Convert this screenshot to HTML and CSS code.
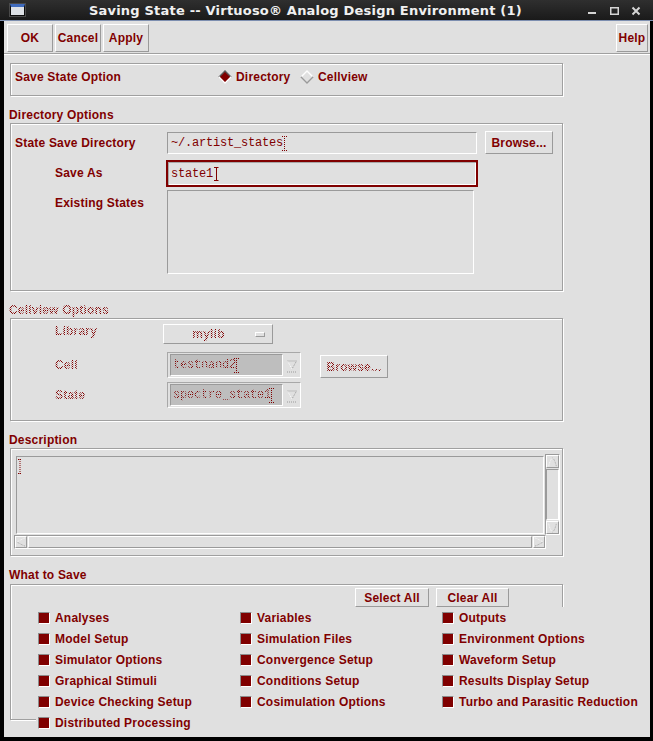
FILE: index.html
```html
<!DOCTYPE html>
<html>
<head>
<meta charset="utf-8">
<title>Saving State</title>
<link rel="stylesheet" href="styles.css">
</head>
<body>
<div class="win">
  <div class="titlebar">
    <span class="ticon"></span>
    <span class="ttitle">Saving State -- Virtuoso® Analog Design Environment (1)</span>
    <svg class="tctrls" width="56" height="20" viewBox="0 0 56 20">
      <path d="M1 13H9" stroke="#d4d4d4" stroke-width="2"/>
      <rect x="23.75" y="7.75" width="7.5" height="6.5" fill="none" stroke="#d4d4d4" stroke-width="1.5"/>
      <path d="M45.5 7.5L52.5 14.5M52.5 7.5L45.5 14.5" stroke="#d4d4d4" stroke-width="2"/>
    </svg>
  </div>
  <div class="tline"></div>
  <div class="main">
    <div class="toolbar">
      <div class="btn tb">OK</div>
      <div class="btn tb">Cancel</div>
      <div class="btn tb">Apply</div>
      <div class="btn tb help">Help</div>
    </div>

    <div class="frame f-save">
      <span class="save-lbl">Save State Option</span>
      <span class="radio r-dir">
        <svg width="14" height="14" viewBox="0 0 14 14">
          <polygon points="7,0.8 13.2,7 7,13.2 0.8,7" fill="#800000"/>
          <path d="M0.8 7.2L7 1L13.2 7.2" fill="none" stroke="#5a5a5a" stroke-width="1.3"/>
          <path d="M0.8 6.8L7 13L13.2 6.8" fill="none" stroke="#ffffff" stroke-width="1.3"/>
        </svg>
        Directory
      </span>
      <span class="radio">
        <svg width="14" height="14" viewBox="0 0 14 14">
          <polygon points="7,0.8 13.2,7 7,13.2 0.8,7" fill="#e0e0e0"/>
          <path d="M0.8 7.2L7 1L13.2 7.2" fill="none" stroke="#ffffff" stroke-width="1.3"/>
          <path d="M0.8 6.8L7 13L13.2 6.8" fill="none" stroke="#9a9a9a" stroke-width="1.3"/>
        </svg>
        Cellview
      </span>
    </div>

    <div class="sect">Directory Options</div>
    <div class="frame f-dir">
      <div class="row">
        <span class="lcol">State Save Directory</span>
        <div class="field fdir">~/.artist_states<svg class="dcur" width="5" height="15" viewBox="0 0 5 15"><path d="M0 .5H5M2.5 0V15M0 14.5H5" stroke="#800000" stroke-dasharray="1 1" fill="none"/></svg></div>
        <div class="btn browse">Browse...</div>
      </div>
      <div class="row r2">
        <span class="lcol ind saveas">Save As</span>
        <div class="field fsave">state1<svg class="scur" width="5" height="14" viewBox="0 0 5 14"><path d="M0 .5H4.5M2.5 0V14M0 13.5H4.5" stroke="#800000" stroke-width="1" fill="none"/></svg></div>
      </div>
      <div class="row r3">
        <span class="lcol ind exist">Existing States</span>
        <div class="listbox"></div>
      </div>
    </div>

    <div class="sect stip">Cellview Options</div>
    <div class="frame f-cv">
      <div class="row">
        <span class="lcol lib ind"><span class="stip">Library</span></span>
        <div class="btn libdd">
          <span class="ddtext stip">mylib</span>
          <span class="ddind"></span>
        </div>
      </div>
      <div class="row rc">
        <span class="lcol ind"><span class="stip">Cell</span></span>
        <div class="combo">
          <div class="cfield"><span class="stip">testnand2</span><svg class="dcur" width="5" height="15" viewBox="0 0 5 15"><path d="M0 .5H5M2.5 0V15M0 14.5H5" stroke="#800000" stroke-dasharray="1 1" fill="none"/></svg></div>
          <div class="carrow"><svg width="14" height="22" viewBox="0 0 14 22"><path d="M2.5 7L7 15" stroke="#fff" stroke-dasharray="1 1" fill="none"/><path d="M2.5 7H11.5L7 15M2 18H12" stroke="#9a9a9a" stroke-dasharray="1 1" fill="none"/></svg></div>
        </div>
        <div class="btn browse2"><span class="stip">Browse...</span></div>
      </div>
      <div class="row rs">
        <span class="lcol ind"><span class="stip">State</span></span>
        <div class="combo">
          <div class="cfield"><span class="stip">spectre_state1</span><svg class="dcur" width="5" height="15" viewBox="0 0 5 15"><path d="M0 .5H5M2.5 0V15M0 14.5H5" stroke="#800000" stroke-dasharray="1 1" fill="none"/></svg></div>
          <div class="carrow"><svg width="14" height="22" viewBox="0 0 14 22"><path d="M2.5 7L7 15" stroke="#fff" stroke-dasharray="1 1" fill="none"/><path d="M2.5 7H11.5L7 15M2 18H12" stroke="#9a9a9a" stroke-dasharray="1 1" fill="none"/></svg></div>
        </div>
      </div>
    </div>

    <div class="sect">Description</div>
    <div class="frame f-desc">
      <div class="drow">
        <div class="tarea"><svg class="tcur" width="5" height="15" viewBox="0 0 5 15"><path d="M0 .5H4M2 0V15M0 14.5H4" stroke="#800000" stroke-dasharray="1 1" fill="none"/></svg></div>
        <div class="vscroll">
          <div class="sarrow up"><svg width="13" height="12" viewBox="0 0 13 12"><path d="M2 11C3 6 5 2 6.5 1" stroke="#fff" stroke-dasharray="1 1" fill="none"/><path d="M6.5 1C8 2 10 6 11 11" stroke="#9a9a9a" stroke-dasharray="1 1" fill="none"/></svg></div>
          <div class="vtrough"></div>
          <div class="sarrow dn"><svg width="13" height="12" viewBox="0 0 13 12"><path d="M2 1C3 6 5 10 6.5 11" stroke="#fff" stroke-dasharray="1 1" fill="none"/><path d="M6.5 11C8 10 10 6 11 1" stroke="#9a9a9a" stroke-dasharray="1 1" fill="none"/></svg></div>
        </div>
      </div>
      <div class="hscroll">
        <div class="harrow"><svg width="12" height="12" viewBox="0 0 12 12"><path d="M11 1C6 3 3 5 1 6" stroke="#fff" stroke-dasharray="1 1" fill="none"/><path d="M1 6C3 7 6 9 11 11" stroke="#9a9a9a" stroke-dasharray="1 1" fill="none"/></svg></div>
        <div class="htrough"></div>
        <div class="harrow"><svg width="12" height="12" viewBox="0 0 12 12"><path d="M1 1C6 3 9 5 11 6" stroke="#fff" stroke-dasharray="1 1" fill="none"/><path d="M11 6C9 7 6 9 1 11" stroke="#9a9a9a" stroke-dasharray="1 1" fill="none"/></svg></div>
      </div>
    </div>

    <div class="sect swhat">What to Save</div>
    <div class="frame f-what">
      <div class="selrow">
        <div class="btn sm sel">Select All</div>
        <div class="btn sm clr">Clear All</div>
      </div>
      <div class="checks">
        <div class="ck"><span class="box"></span>Analyses</div>
        <div class="ck"><span class="box"></span>Variables</div>
        <div class="ck"><span class="box"></span>Outputs</div>
        <div class="ck"><span class="box"></span>Model Setup</div>
        <div class="ck"><span class="box"></span>Simulation Files</div>
        <div class="ck"><span class="box"></span>Environment Options</div>
        <div class="ck"><span class="box"></span>Simulator Options</div>
        <div class="ck"><span class="box"></span>Convergence Setup</div>
        <div class="ck"><span class="box"></span>Waveform Setup</div>
        <div class="ck"><span class="box"></span>Graphical Stimuli</div>
        <div class="ck"><span class="box"></span>Conditions Setup</div>
        <div class="ck"><span class="box"></span>Results Display Setup</div>
        <div class="ck"><span class="box"></span>Device Checking Setup</div>
        <div class="ck"><span class="box"></span>Cosimulation Options</div>
        <div class="ck"><span class="box"></span>Turbo and Parasitic Reduction</div>
        <div class="ck"><span class="box"></span>Distributed Processing</div>
      </div>
    </div>
  </div>
</div>
</body>
</html>
```

FILE: styles.css
```css
* { box-sizing: border-box; }
html, body { margin: 0; padding: 0; background: #000; }
body { width: 653px; height: 741px; overflow: hidden; font-family: "Liberation Sans", Arial, sans-serif; }

.win { width: 653px; height: 741px; display: flex; flex-direction: column; background: #000; }

.titlebar { flex: none; height: 20px; display: flex; align-items: center; background: linear-gradient(#2f2f2f, #1a1a1a); }
.ticon { flex: none; width: 15px; height: 12px; margin-left: 10px; background: #dde1e6; border: 1px solid #0c0c0c; border-top: 3px solid #3f6bbd; box-shadow: 0 0 0 1px #4a4a4a; }
.ttitle { margin-left: 64px; font: bold 13px "DejaVu Sans", sans-serif; letter-spacing: 0.2px; white-space: nowrap; color: #f0f0f0; }
.tctrls { flex: none; margin-left: auto; margin-right: 10px; }
.tline { flex: none; height: 1px; background: #7d8fb0; }

.main { flex: none; height: 716px; margin: 0 3px 0 4px; background: #e0e0e0; color: #800000; font-size: 12px; font-weight: bold; letter-spacing: 0.2px; line-height: 14px; overflow: hidden; }

.btn { display: flex; align-items: center; justify-content: center; background: #e0e0e0; border: 1px solid; border-color: #fff #9a9a9a #9a9a9a #fff; white-space: nowrap; flex: none; }

.toolbar { display: flex; gap: 2px; height: 33px; padding: 3px 2px 1px 3px; border-bottom: 1px solid #a0a0a0; box-shadow: 0 1px 0 #fff; }
.tb { width: 46px; height: 28px; }
.help { margin-left: auto; width: 32px; }

.frame { margin-left: 6px; width: 553px; border: 1px solid #a0a0a0; box-shadow: inset 1px 1px 0 #fff, 1px 1px 0 #fff; }
.sect { margin: 12px 0 1px 5px; height: 14px; width: max-content; }
.swhat { margin-bottom: 2px; }

.f-save { margin-top: 9px; height: 33px; display: flex; align-items: flex-start; padding: 6px 0 0 4px; }
.save-lbl { width: 203px; flex: none; }
.radio { display: flex; align-items: center; gap: 4px; height: 14px; }
.radio svg { flex: none; }
.r-dir { width: 82px; flex: none; }

.row { display: flex; align-items: flex-start; }
.lcol { flex: none; width: 152px; }
.ind { padding-left: 40px; }

.f-dir { height: 168px; padding: 7px 0 0 4px; }
.f-dir .row:first-child .lcol { margin-top: 5px; }
.field { flex: none; display: flex; align-items: center; background: #e0e0e0; border: 1px solid; border-color: #9a9a9a #fff #fff #9a9a9a; font: 12px "Liberation Mono", monospace; color: #800000; letter-spacing: -0.2px; padding-left: 3px; }
.fdir { width: 310px; height: 22px; margin-top: 1px; }
.dcur { margin-left: -1px; margin-top: 1px; }
.browse { width: 68px; height: 23px; margin-left: 8px; }
.r2 { margin-top: 6px; }
.saveas { width: 151px; margin-top: 6px; }
.fsave { width: 312px; height: 27px; border: 2px solid #800000; box-shadow: inset 1px 1px 0 #a8a8a8, inset -1px -1px 0 #fff; padding-left: 3px; }
.scur { margin-left: 1px; margin-top: 1px; }
.r3 { margin-top: 3px; }
.exist { padding-top: 6px; }
.listbox { flex: none; width: 307px; height: 84px; border: 1px solid; border-color: #9a9a9a #fff #fff #9a9a9a; }

.stip { color: transparent; background-image: repeating-conic-gradient(#800000 0 25%, transparent 0 50%); background-size: 2px 2px; -webkit-background-clip: text; background-clip: text; }

.f-cv { height: 103px; padding: 5px 0 0 4px; }
.lib { width: 148px; }
.libdd { width: 110px; height: 20px; justify-content: flex-start; }
.ddtext { width: 89px; text-align: center; }
.ddind { width: 10px; height: 5px; margin-left: 2px; border: 1px solid; border-color: #fff #9a9a9a #9a9a9a #fff; }
.rc { margin-top: 8px; align-items: center; }
.rs { margin-top: 4px; align-items: center; }
.combo { flex: none; width: 134px; height: 26px; display: flex; padding: 1px 0 1px 2px; border: 1px solid; border-color: #a8a8a8 #fff #fff #a8a8a8; }
.cfield { flex: 1; display: flex; align-items: center; background: #bebebe; border: 1px solid; border-color: #9a9a9a #fff #fff #9a9a9a; padding-left: 2px; font: 12px "Liberation Mono", monospace; letter-spacing: -0.2px; }
.cfield .dcur { margin-left: -2px; }
.carrow { width: 17px; display: flex; align-items: center; justify-content: center; }
.browse2 { width: 68px; height: 23px; margin-left: 19px; align-self: flex-start; margin-top: 3px; }

.f-desc { height: 108px; padding: 5px 0 0 3px; }
.drow { display: flex; align-items: flex-start; }
.tarea { flex: none; width: 528px; height: 78px; margin: 2px 0 0 2px; border: 1px solid; border-color: #9a9a9a #fff #fff #9a9a9a; padding: 2px 0 0 1px; }
.tcur { display: block; }
.vscroll { flex: none; width: 15px; height: 81px; margin-left: 1px; display: flex; flex-direction: column; border: 1px solid; border-color: #9a9a9a #fff #fff #9a9a9a; }
.sarrow { flex: none; height: 13px; display: flex; align-items: center; justify-content: center; border: 1px solid; border-color: #fff #9a9a9a #9a9a9a #fff; }
.vtrough { flex: 1; border: 1px solid; border-color: #9a9a9a #fff #fff #9a9a9a; margin: 1px 0; }
.hscroll { width: 532px; height: 14px; display: flex; border: 1px solid; border-color: #9a9a9a #fff #fff #9a9a9a; }
.harrow { flex: none; width: 12px; display: flex; align-items: center; justify-content: center; border: 1px solid; border-color: #fff #9a9a9a #9a9a9a #fff; }
.htrough { flex: 1; border: 1px solid; border-color: #fff #9a9a9a #9a9a9a #fff; margin: 0 1px; }

.f-what { height: 136px; padding-top: 3px; }
.selrow { display: flex; gap: 7px; margin-left: 344px; }
.sm { height: 19px; }
.sel { width: 74px; }
.clr { width: 73px; }
.checks { margin-left: 25px; width: 610px; background: #e0e0e0; display: grid; grid-template-columns: 202px 202px 206px; grid-auto-rows: 21px; }
.ck { display: flex; align-items: center; gap: 5px; padding-left: 2px; white-space: nowrap; }
.box { flex: none; width: 12px; height: 12px; background: #800000; border: 1px solid; border-color: #8c8c8c #fff #fff #8c8c8c; }
```
